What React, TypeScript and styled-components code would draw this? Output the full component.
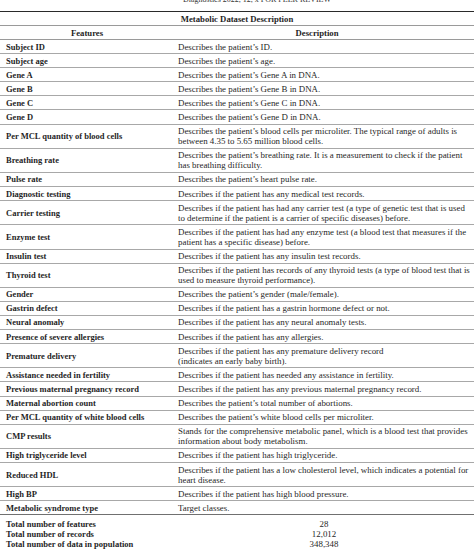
import React from 'react';
import styled, { createGlobalStyle } from 'styled-components';

type Row = { feature: string; desc: string[] };

const rows: Row[] = [
  { feature: 'Subject ID', desc: ['Describes the patient’s ID.'] },
  { feature: 'Subject age', desc: ['Describes the patient’s age.'] },
  { feature: 'Gene A', desc: ['Describes the patient’s Gene A in DNA.'] },
  { feature: 'Gene B', desc: ['Describes the patient’s Gene B in DNA.'] },
  { feature: 'Gene C', desc: ['Describes the patient’s Gene C in DNA.'] },
  { feature: 'Gene D', desc: ['Describes the patient’s Gene D in DNA.'] },
  {
    feature: 'Per MCL quantity of blood cells',
    desc: [
      'Describes the patient’s blood cells per microliter. The typical range of adults is',
      'between 4.35 to 5.65 million blood cells.',
    ],
  },
  {
    feature: 'Breathing rate',
    desc: [
      'Describes the patient’s breathing rate. It is a measurement to check if the patient',
      'has breathing difficulty.',
    ],
  },
  { feature: 'Pulse rate', desc: ['Describes the patient’s heart pulse rate.'] },
  { feature: 'Diagnostic testing', desc: ['Describes if the patient has any medical test records.'] },
  {
    feature: 'Carrier testing',
    desc: [
      'Describes if the patient has had any carrier test (a type of genetic test that is used',
      'to determine if the patient is a carrier of specific diseases) before.',
    ],
  },
  {
    feature: 'Enzyme test',
    desc: [
      'Describes if the patient has had any enzyme test (a blood test that measures if the',
      'patient has a specific disease) before.',
    ],
  },
  { feature: 'Insulin test', desc: ['Describes if the patient has any insulin test records.'] },
  {
    feature: 'Thyroid test',
    desc: [
      'Describes if the patient has records of any thyroid tests (a type of blood test that is',
      'used to measure thyroid performance).',
    ],
  },
  { feature: 'Gender', desc: ['Describes the patient’s gender (male/female).'] },
  { feature: 'Gastrin defect', desc: ['Describes if the patient has a gastrin hormone defect or not.'] },
  { feature: 'Neural anomaly', desc: ['Describes if the patient has any neural anomaly tests.'] },
  { feature: 'Presence of severe allergies', desc: ['Describes if the patient has any allergies.'] },
  {
    feature: 'Premature delivery',
    desc: [
      'Describes if the patient has any premature delivery record',
      '(indicates an early baby birth).',
    ],
  },
  {
    feature: 'Assistance needed in fertility',
    desc: ['Describes if the patient has needed any assistance in fertility.'],
  },
  {
    feature: 'Previous maternal pregnancy record',
    desc: ['Describes if the patient has any previous maternal pregnancy record.'],
  },
  { feature: 'Maternal abortion count', desc: ['Describes the patient’s total number of abortions.'] },
  {
    feature: 'Per MCL quantity of white blood cells',
    desc: ['Describes the patient’s white blood cells per microliter.'],
  },
  {
    feature: 'CMP results',
    desc: [
      'Stands for the comprehensive metabolic panel, which is a blood test that provides',
      'information about body metabolism.',
    ],
  },
  { feature: 'High triglyceride level', desc: ['Describes if the patient has high triglyceride.'] },
  {
    feature: 'Reduced HDL',
    desc: [
      'Describes if the patient has a low cholesterol level, which indicates a potential for',
      'heart disease.',
    ],
  },
  { feature: 'High BP', desc: ['Describes if the patient has high blood pressure.'] },
  { feature: 'Metabolic syndrome type', desc: ['Target classes.'] },
];

const totals = [
  { label: 'Total number of features', value: '28' },
  { label: 'Total number of records', value: '12,012' },
  { label: 'Total number of data in population', value: '348,348' },
];

const GlobalStyle = createGlobalStyle`
  html, body {
    margin: 0;
    padding: 0;
    background: #ffffff;
  }
  body {
    font-family: "Liberation Serif", "Times New Roman", serif;
    color: #1f1f1f;
  }
`;

const Page = styled.div`
  width: 474px;
  height: 552px;
  overflow: hidden;
`;

const RunningHead = styled.div`
  height: 11px;
  overflow: hidden;
  font-size: 8px;
  line-height: 10px;
  color: #333;
  text-align: center;
  padding-left: 40px;
  span {
    display: block;
    margin-top: -5px;
  }
`;

const Table = styled.table`
  width: 474px;
  border-collapse: collapse;
  table-layout: fixed;
  font-size: 8.9px;
`;

const Title = styled.th`
  border-top: 1.5px solid #2a2a2a;
  border-bottom: 1px solid #9a9a9a;
  height: 13px;
  padding: 0;
  line-height: 12px;
  font-size: 8.7px;
  font-weight: bold;
  text-align: center;
`;

const Head = styled.th<{ $shift?: number }>`
  border-bottom: 1px solid #9a9a9a;
  height: 13px;
  padding: 0 ${(p) => p.$shift ?? 0}px 0 0;
  line-height: 12px;
  font-size: 8.7px;
  font-weight: bold;
  text-align: center;
`;

const Cell = styled.td<{ $last?: boolean }>`
  padding: 1.5px 4px;
  line-height: 10.1px;
  white-space: nowrap;
  vertical-align: middle;
  border-bottom: ${(p) => (p.$last ? '1.5px solid #707070' : '1px solid #a8a8a8')};
`;

const Feature = styled(Cell)`
  padding-left: 6px;
  font-size: 8.5px;
  font-weight: bold;
`;

const TotalLabel = styled.td<{ $first?: boolean }>`
  padding: ${(p) => (p.$first ? '4px' : '0')} 6px 0;
  line-height: 10px;
  font-size: 8.5px;
  font-weight: bold;
  white-space: nowrap;
`;

const TotalValue = styled.td<{ $first?: boolean }>`
  padding: ${(p) => (p.$first ? '4px' : '0')} 0 0;
  line-height: 10px;
  text-align: center;
`;

const App: React.FC = () => (
  <Page>
    <GlobalStyle />
    <RunningHead>
      <span>Diagnostics 2022, 12, x FOR PEER REVIEW</span>
    </RunningHead>
    <Table>
      <colgroup>
        <col style={{ width: 174 }} />
        <col style={{ width: 300 }} />
      </colgroup>
      <thead>
        <tr>
          <Title colSpan={2}>Metabolic Dataset Description</Title>
        </tr>
        <tr>
          <Head>Features</Head>
          <Head $shift={14}>Description</Head>
        </tr>
      </thead>
      <tbody>
        {rows.map((r, i) => {
          const last = i === rows.length - 1;
          return (
            <tr key={r.feature}>
              <Feature $last={last}>{r.feature}</Feature>
              <Cell $last={last}>
                {r.desc.map((line, j) => (
                  <React.Fragment key={j}>
                    {j > 0 && <br />}
                    {line}
                  </React.Fragment>
                ))}
              </Cell>
            </tr>
          );
        })}
        {totals.map((t, i) => (
          <tr key={t.label}>
            <TotalLabel $first={i === 0}>{t.label}</TotalLabel>
            <TotalValue $first={i === 0}>{t.value}</TotalValue>
          </tr>
        ))}
      </tbody>
    </Table>
  </Page>
);

export default App;
